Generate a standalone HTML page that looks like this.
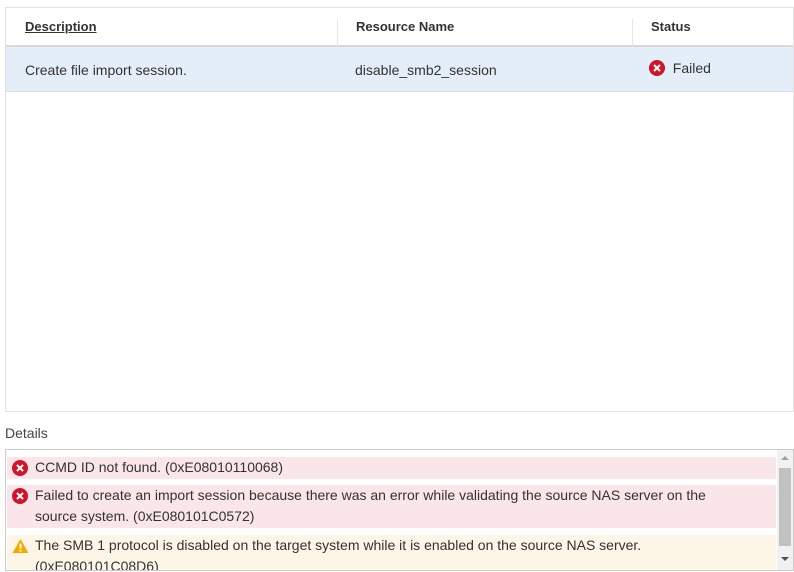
<!DOCTYPE html>
<html><head><style>
*{margin:0;padding:0;box-sizing:border-box}
body{width:794px;height:572px;background:#fff;font-family:"Liberation Sans",sans-serif;color:#333;position:relative;overflow:hidden}
.tbl{position:absolute;left:5px;top:7px;width:789px;height:405px;border:1px solid #e2e2e2}
.hdr{position:absolute;left:0;top:0;width:787px;height:39px;border-bottom:2px solid #d8d8d8;font-size:13px;color:#333}
.hdr div{position:absolute;top:11px}
.sep{position:absolute;top:0;width:1px;height:38px;background:#e6e6e6}
.row{position:absolute;left:0;top:39px;width:787px;height:45px;background:#e3eef8;border-bottom:1px solid #d6dfe8;font-size:14px}
.row div{position:absolute;top:15px}
.lbl{position:absolute;left:5px;top:425px;font-size:14px;color:#444}
.det{position:absolute;left:5px;top:449px;width:789px;height:122px;border:1px solid #ccc;overflow:hidden;font-size:14px;color:#333}
.it{position:absolute;left:1px;width:769px;padding-left:28px;padding-right:52px;line-height:21px}
.ic{position:absolute;left:5px;top:3px}
.sb{position:absolute;left:771px;top:0;width:16px;height:120px;background:#f1f1f1}
</style></head><body>
<div class="tbl">
 <div class="hdr">
  <div style="left:19px;text-decoration:underline;font-weight:bold;font-size:13px">Description</div>
  <div class="sep" style="left:331px"></div>
  <div style="left:350px;font-weight:bold">Resource Name</div>
  <div class="sep" style="left:626px"></div>
  <div style="left:645px;font-weight:bold">Status</div>
 </div>
 <div class="row">
  <div style="left:19px">Create file import session.</div>
  <div style="left:349px">disable_smb2_session</div>
  <div style="left:643px;top:13px"><svg width="16" height="16" viewBox="0 0 16 16" style="vertical-align:-3px"><circle cx="8" cy="8" r="8" fill="#d0152b"/><path d="M5 5L11 11M11 5L5 11" stroke="#fff" stroke-width="2"/></svg>&nbsp; Failed</div>
 </div>
</div>
<div class="lbl">Details</div>
<div class="det">
 <div class="it" style="top:7px;height:22px;background:#fae5e8"><svg class="ic" width="16" height="16" viewBox="0 0 16 16"><circle cx="8" cy="8" r="8" fill="#d0152b"/><path d="M5 5L11 11M11 5L5 11" stroke="#fff" stroke-width="2"/></svg>CCMD ID not found. (0xE08010110068)</div>
 <div class="it" style="top:35px;height:43px;background:#fae5e8"><svg class="ic" width="16" height="16" viewBox="0 0 16 16"><circle cx="8" cy="8" r="8" fill="#d0152b"/><path d="M5 5L11 11M11 5L5 11" stroke="#fff" stroke-width="2"/></svg>Failed to create an import session because there was an error while validating the source NAS server on the source system. (0xE080101C0572)</div>
 <div class="it" style="top:85px;height:44px;background:#fdf5e6"><svg class="ic" width="17" height="16" viewBox="0 0 17 16"><path d="M8.5 1L16.5 15H0.5Z" fill="#f5a800"/><path d="M8.5 5.5V10.5" stroke="#fff" stroke-width="1.8"/><circle cx="8.5" cy="12.7" r="1" fill="#fff"/></svg>The SMB 1 protocol is disabled on the target system while it is enabled on the source NAS server. (0xE080101C08D6)</div>
 <div class="sb">
  <div style="position:absolute;left:4px;top:6px;width:0;height:0;border-left:4px solid transparent;border-right:4px solid transparent;border-bottom:4px solid #a0a0a0"></div>
  <div style="position:absolute;left:2px;top:18px;width:12px;height:78px;background:#c1c1c1"></div>
  <div style="position:absolute;left:4px;top:107px;width:0;height:0;border-left:4px solid transparent;border-right:4px solid transparent;border-top:4px solid #505050"></div>
 </div>
</div>
</body></html>
